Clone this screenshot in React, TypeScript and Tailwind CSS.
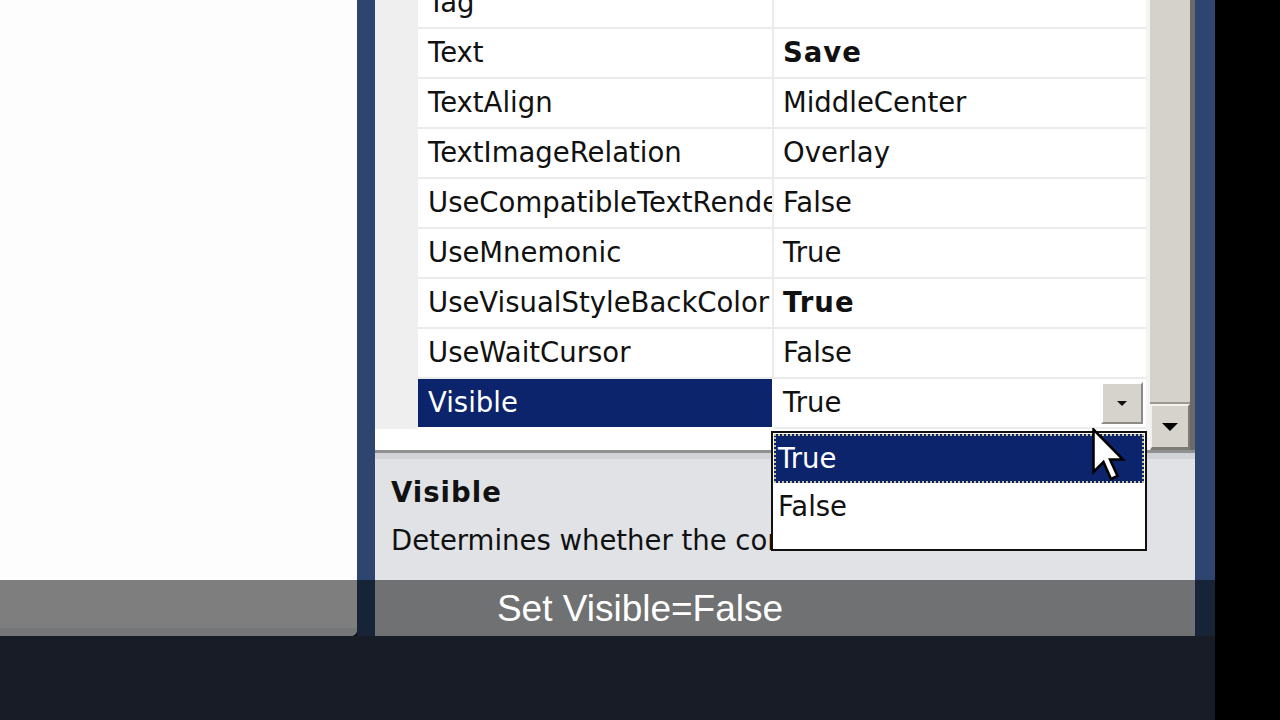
import React from 'react';

type Row = { name: string; value: string; bold?: boolean; selected?: boolean };

const rows: Row[] = [
  { name: 'Tag', value: '' },
  { name: 'Text', value: 'Save', bold: true },
  { name: 'TextAlign', value: 'MiddleCenter' },
  { name: 'TextImageRelation', value: 'Overlay' },
  { name: 'UseCompatibleTextRendering', value: 'False' },
  { name: 'UseMnemonic', value: 'True' },
  { name: 'UseVisualStyleBackColor', value: 'True', bold: true },
  { name: 'UseWaitCursor', value: 'False' },
  { name: 'Visible', value: 'True', selected: true },
];

const Triangle: React.FC<{ big?: boolean }> = ({ big }) =>
  big ? (
    <div className="w-0 h-0 border-x-[8px] border-x-transparent border-t-[8px] border-t-black" />
  ) : (
    <div className="w-0 h-0 border-x-[5px] border-x-transparent border-t-[5px] border-t-[#111]" />
  );

const GridRow: React.FC<{ row: Row }> = ({ row }) => (
  <div className="flex h-[50px] shrink-0">
    <div className="w-[43px] bg-[#efefef] shrink-0" />
    <div
      className={`w-[356px] shrink-0 flex items-center pl-[10px] overflow-hidden whitespace-nowrap border-b-2 border-r-2 ${
        row.selected ? 'bg-[#0b246b] text-white border-b-white border-r-white' : 'bg-white text-[#111] border-[#ebebeb]'
      }`}
    >
      {row.name}
    </div>
    <div className="flex-1 flex items-center pl-[9px] pr-[3px] bg-white border-b-2 border-[#ebebeb] overflow-hidden whitespace-nowrap">
      <span className={`flex-1 ${row.bold ? 'font-bold tracking-[1px]' : ''}`}>{row.value}</span>
      {row.selected && (
        <div className="w-[42px] h-[42px] bg-[#d6d3cc] border-t-2 border-l-2 border-white border-b-2 border-r-2 border-b-[#8c8a85] border-r-[#8c8a85] flex items-center justify-center">
          <Triangle />
        </div>
      )}
    </div>
  </div>
);

const PropertyGrid: React.FC = () => (
  <div className="w-[820px] h-full flex flex-col bg-[#e0e2e5]">
    {/* grid + scrollbar */}
    <div className="h-[450px] flex shrink-0 bg-white">
      <div className="w-[771px] overflow-hidden flex flex-col text-[27.5px] text-[#111]">
        <div className="flex flex-col -mt-[21px]">
          {rows.map((r) => (
            <GridRow key={r.name} row={r} />
          ))}
        </div>
      </div>
      <div className="w-[4px] bg-[#f4f4f4]" />
      <div className="w-[40px] flex flex-col bg-[#d4d2cb]">
        <div className="flex-1 border-b-2 border-[#9a9891]" />
        <div className="h-[46px] border-t-2 border-l-2 border-[#f2f1ee] border-b-[3px] border-r-2 border-b-[#7d7b76] border-r-[#7d7b76] flex items-center justify-center bg-[#d6d3cc]">
          <Triangle big />
        </div>
      </div>
      <div className="w-[5px] bg-[#6a6a6a]" />
    </div>
    {/* splitter */}
    <div className="h-[3px] bg-[#8f9091] shrink-0" />
    <div className="h-[6px] bg-[#d2d3d6] shrink-0" />
    {/* description */}
    <div className="flex-1 pt-[9px] pl-[16px] text-[27.5px] text-[#111] leading-[48px] overflow-hidden whitespace-nowrap">
      <div className="font-bold tracking-[1px]">Visible</div>
      <div className="w-[380px] overflow-hidden">Determines whether the control is displayed.</div>
    </div>
  </div>
);

const Cursor: React.FC = () => (
  <svg
    className="absolute left-[1092px] top-[428px]"
    width="34"
    height="56"
    viewBox="0 0 34 56"
  >
    <path
      d="M1.5 1.5 L1.5 44 L11.5 34 L19 51 L25.5 48 L18 31.5 L31 31.5 Z"
      fill="white"
      stroke="black"
      strokeWidth="2.5"
      strokeLinejoin="miter"
    />
  </svg>
);

export default function App() {
  return (
    <div className="relative w-[1280px] h-[720px] overflow-hidden flex bg-black font-['DejaVu_Sans',sans-serif]">
      <div className="w-[1215px] h-full bg-[#171c27] flex flex-col">
        <div className="h-[636px] flex shrink-0">
          <div className="w-[357px] bg-[#fdfdfd] rounded-br-[6px] flex flex-col">
            <div className="flex-1" />
            <div className="h-[8px] bg-[#eceef1] rounded-br-[6px]" />
          </div>
          <div className="w-[18px] bg-[#2e466f]" />
          <PropertyGrid />
          <div className="w-[20px] bg-[#2e466f]" />
        </div>
      </div>
      <div className="flex-1 bg-black" />

      {/* dropdown list */}
      <div className="absolute left-[771px] top-[431px] w-[376px] h-[120px] bg-white border-2 border-[#111] text-[27.5px] text-[#111]">
        <div className="h-[49px] m-[1px] bg-[#0b246b] text-white flex items-center pl-[4px] outline-2 outline-dotted outline-[#c9c29a] -outline-offset-2">
          True
        </div>
        <div className="h-[46px] flex items-center pl-[5px]">False</div>
      </div>

      <Cursor />

      {/* caption */}
      <div className="absolute left-0 top-[580px] w-[1215px] h-[56px] bg-black/50 flex items-center justify-center pl-[65px]">
        <span className="text-white text-[37px] font-['Liberation_Sans',Arial,sans-serif] leading-none">
          Set Visible=False
        </span>
      </div>
    </div>
  );
}
